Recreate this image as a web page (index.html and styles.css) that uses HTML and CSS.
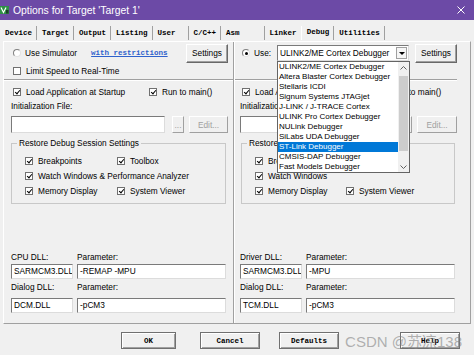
FILE: index.html
```html
<!DOCTYPE html>
<html lang="en">
<head>
    <meta charset="UTF-8">
    <meta name="viewport" content="width=device-width, initial-scale=1.0">
    <title>Options for Target 'Target 1'</title>
    <link rel="stylesheet" href="styles.css">
</head>
<body>
    <div class="window">
        <div class="titlebar">
            <svg class="title-icon" viewBox="0 0 9 8">
                <rect width="9" height="8" fill="#2f8f46"/>
                <path d="M1 1.5L3.5 6.5L6 1.5" stroke="#fff" stroke-width="1.2" fill="none"/>
                <rect x="6" y="4" width="2.5" height="3.5" fill="#1d3d28"/>
            </svg>
            <span class="title-text">Options for Target 'Target 1'</span>
            <svg class="title-close" viewBox="0 0 8 8">
                <path d="M0.5 0.5L7.5 7.5M7.5 0.5L0.5 7.5" stroke="#fff" stroke-width="1"/>
            </svg>
        </div>

        <div class="tabs">
            <span class="tab">Device</span>
            <span class="tab">Target</span>
            <span class="tab">Output</span>
            <span class="tab">Listing</span>
            <span class="tab tab-user">User</span>
            <span class="tab">C/C++</span>
            <span class="tab tab-asm">Asm</span>
            <span class="tab">Linker</span>
            <span class="tab active">Debug</span>
            <span class="tab">Utilities</span>
        </div>

        <div class="panel">
            <!-- simulator side -->
            <div class="col col-left">
                <div class="row-top">
                    <span class="radio"></span>
                    <span>Use Simulator</span>
                    <a class="link">with restrictions</a>
                    <button class="btn btn-settings">Settings</button>
                </div>
                <div class="row"><span class="cb"></span>Limit Speed to Real-Time</div>
                <div class="sep"></div>
                <div class="pair">
                    <div class="check"><span class="cb on"></span>Load Application at Startup</div>
                    <div class="check"><span class="cb on"></span>Run to main()</div>
                </div>
                <div class="row">Initialization File:</div>
                <div class="file-row">
                    <div class="field"></div>
                    <button class="btn btn-dots" disabled>...</button>
                    <button class="btn btn-edit" disabled>Edit...</button>
                </div>
                <fieldset class="group">
                    <legend>Restore Debug Session Settings</legend>
                    <div class="group-row">
                        <div class="check"><span class="cb on"></span>Breakpoints</div>
                        <div class="check"><span class="cb on"></span>Toolbox</div>
                    </div>
                    <div class="group-row">
                        <div class="check wide"><span class="cb on"></span>Watch Windows &amp; Performance Analyzer</div>
                    </div>
                    <div class="group-row">
                        <div class="check"><span class="cb on"></span>Memory Display</div>
                        <div class="check"><span class="cb on"></span>System Viewer</div>
                    </div>
                </fieldset>
                <div class="dll">
                    <span class="dll-label">CPU DLL:</span>
                    <span class="dll-label">Parameter:</span>
                    <div class="field">SARMCM3.DLL</div>
                    <div class="field">-REMAP -MPU</div>
                    <span class="dll-label second">Dialog DLL:</span>
                    <span class="dll-label second">Parameter:</span>
                    <div class="field second">DCM.DLL</div>
                    <div class="field second">-pCM3</div>
                </div>
            </div>

            <!-- target side -->
            <div class="col col-right">
                <div class="row-top">
                    <span class="radio on"></span>
                    <span class="use-label">Use:</span>
                    <div class="select">
                        <span>ULINK2/ME Cortex Debugger</span>
                        <span class="select-arrow"></span>
                        <div class="dropdown">
                            <div class="dropdown-items">
                                <div class="dropdown-item">ULINK2/ME Cortex Debugger</div>
                                <div class="dropdown-item">Altera Blaster Cortex Debugger</div>
                                <div class="dropdown-item">Stellaris ICDI</div>
                                <div class="dropdown-item">Signum Systems JTAGjet</div>
                                <div class="dropdown-item">J-LINK / J-TRACE Cortex</div>
                                <div class="dropdown-item">ULINK Pro Cortex Debugger</div>
                                <div class="dropdown-item">NULink Debugger</div>
                                <div class="dropdown-item">SiLabs UDA Debugger</div>
                                <div class="dropdown-item selected">ST-Link Debugger</div>
                                <div class="dropdown-item">CMSIS-DAP Debugger</div>
                                <div class="dropdown-item">Fast Models Debugger</div>
                            </div>
                            <div class="scrollbar">
                                <span class="scroll-arrow">
                                    <svg width="7" height="4" viewBox="0 0 7 4"><path d="M0.5 3.5L3.5 0.5L6.5 3.5" stroke="#606060" fill="none"/></svg>
                                </span>
                                <span class="scroll-thumb"></span>
                                <span class="scroll-arrow down">
                                    <svg width="7" height="4" viewBox="0 0 7 4"><path d="M0.5 0.5L3.5 3.5L6.5 0.5" stroke="#606060" fill="none"/></svg>
                                </span>
                            </div>
                        </div>
                    </div>
                    <button class="btn btn-settings">Settings</button>
                </div>
                <div class="row"></div>
                <div class="sep"></div>
                <div class="pair">
                    <div class="check"><span class="cb on"></span>Load Application at Startup</div>
                    <div class="check"><span class="cb on"></span>Run to main()</div>
                </div>
                <div class="row">Initialization File:</div>
                <div class="file-row">
                    <div class="field"></div>
                    <button class="btn btn-dots" disabled>...</button>
                    <button class="btn btn-edit" disabled>Edit...</button>
                </div>
                <fieldset class="group">
                    <legend>Restore Debug Session Settings</legend>
                    <div class="group-row">
                        <div class="check"><span class="cb on"></span>Breakpoints</div>
                        <div class="check"><span class="cb on"></span>Toolbox</div>
                    </div>
                    <div class="group-row">
                        <div class="check wide"><span class="cb on"></span>Watch Windows</div>
                    </div>
                    <div class="group-row">
                        <div class="check"><span class="cb on"></span>Memory Display</div>
                        <div class="check"><span class="cb on"></span>System Viewer</div>
                    </div>
                </fieldset>
                <div class="dll">
                    <span class="dll-label">Driver DLL:</span>
                    <span class="dll-label">Parameter:</span>
                    <div class="field">SARMCM3.DLL</div>
                    <div class="field">-MPU</div>
                    <span class="dll-label second">Dialog DLL:</span>
                    <span class="dll-label second">Parameter:</span>
                    <div class="field second">TCM.DLL</div>
                    <div class="field second">-pCM3</div>
                </div>
            </div>
        </div>

        <div class="actions">
            <button class="btn btn-action btn-ok">OK</button>
            <button class="btn btn-action btn-cancel">Cancel</button>
            <button class="btn btn-action btn-defaults">Defaults</button>
            <button class="btn btn-action btn-help">Help</button>
        </div>

        <div class="watermark">CSDN @苏凉138</div>
    </div>
</body>
</html>
```

FILE: styles.css
```css
* {
    box-sizing: border-box;
}

body {
    margin: 0;
    width: 474px;
    height: 355px;
    overflow: hidden;
    background-color: #f0f0f0;
    font-family: "Liberation Sans", Arial, sans-serif;
    font-size: 8.3px;
    color: #000;
}

.window {
    position: relative;
    height: 355px;
}

/* title bar */
.titlebar {
    height: 20px;
    display: flex;
    align-items: center;
    background-color: #6c4aa6;
    color: #fff;
}

.title-icon {
    width: 9px;
    height: 8px;
}

.title-text {
    margin-left: 4px;
    font-size: 10.4px;
}

.title-close {
    width: 8px;
    height: 8px;
    margin-left: auto;
    margin-right: 9px;
}

/* tab strip */
.tabs {
    display: flex;
    height: 21px;
    padding-top: 6px;
    font-family: "Liberation Mono", monospace;
    font-weight: bold;
    font-size: 7.5px;
}

.tab {
    height: 14px;
    line-height: 14px;
    padding: 0 4px 0 5px;
    border-right: 1px solid #a0a0a0;
}

.tab-user {
    padding-right: 12px;
}

.tab-asm {
    padding-right: 24px;
}

.tab.active {
    line-height: 12px;
    border-left: 1px solid #fff;
    margin-left: -1px;
}

/* main panel */
.panel {
    display: grid;
    grid-template-columns: 230px 1fr;
    height: 283px;
    margin: 0 3px;
    border: 1px solid #a0a0a0;
    border-top-color: #fff;
    border-left-color: #fff;
}

.col {
    display: flex;
    flex-direction: column;
}

.col-left {
    padding: 1px 5px 10px 7px;
    border-right: 1px solid #a0a0a0;
}

.col-right {
    padding: 1px 13px 10px 5px;
    border-left: 1px solid #fff;
}

.row-top {
    display: flex;
    align-items: center;
    height: 20px;
}

.row {
    display: flex;
    align-items: center;
    height: 12px;
    margin-top: 2px;
}

.sep {
    height: 2px;
    margin: 2px -5px 0 -7px;
    border-top: 1px solid #a0a0a0;
    border-bottom: 1px solid #fff;
}

.col-right .sep {
    margin: 2px 0 0 -5px;
}

.pair {
    display: grid;
    grid-template-columns: 136px auto;
    height: 12px;
    margin-top: 5px;
}

.check {
    display: flex;
    align-items: center;
    white-space: nowrap;
}

/* radio and checkbox */
.radio {
    width: 8px;
    height: 8px;
    margin: 0 4px 0 2px;
    border: 1px solid;
    border-color: #808080 #e3e3e3 #e3e3e3 #808080;
    border-radius: 50%;
    background-color: #fff;
    display: flex;
    align-items: center;
    justify-content: center;
}

.radio.on::after {
    content: "";
    width: 3px;
    height: 3px;
    border-radius: 50%;
    background-color: #000;
}

.cb {
    flex: none;
    width: 8px;
    height: 8px;
    margin: 0 5px 0 2px;
    border: 1px solid #707070;
    background-color: #fff;
    display: flex;
    align-items: center;
    justify-content: center;
}

.cb.on::after {
    content: "";
    width: 2px;
    height: 4px;
    margin-top: -1px;
    border: solid #000;
    border-width: 0 1.5px 1.5px 0;
    transform: rotate(40deg);
}

.link {
    margin-left: 14px;
    font-family: "Liberation Mono", monospace;
    font-weight: bold;
    font-size: 7.5px;
    color: #2f62cc;
    text-decoration: underline;
}

/* buttons */
.btn {
    padding: 0;
    font-family: inherit;
    font-size: inherit;
    color: #000;
    background-color: #f0f0f0;
    border: 1px solid;
    border-color: #fff #696969 #696969 #fff;
    box-shadow: inset -1px -1px #a0a0a0;
}

.btn:disabled {
    color: #a0a0a0;
    border-color: #fff #a0a0a0 #a0a0a0 #fff;
    box-shadow: none;
}

.btn-settings {
    width: 42px;
    height: 19px;
    margin-left: auto;
}

/* text fields */
.field {
    height: 15px;
    padding-left: 2px;
    line-height: 13px;
    white-space: nowrap;
    overflow: hidden;
    background-color: #fff;
    border: 1px solid;
    border-color: #7a7a7a #dcdcdc #dcdcdc #7a7a7a;
}

.file-row {
    display: flex;
    height: 17px;
    margin-top: 4px;
}

.file-row .field {
    flex: 1;
    height: 17px;
}

.btn-dots {
    width: 12px;
    margin-left: 7px;
}

.btn-edit {
    width: 39px;
    margin-left: 5px;
}

.col-right .btn-edit {
    width: 40px;
}

/* restore settings group */
.group {
    min-width: 0;
    margin: 4px 2px 0 0;
    padding: 4px 0 5px 5px;
    border: 1px solid #c8c8c8;
}

.col-right .group {
    margin-left: 1px;
}

.group legend {
    height: 12px;
    padding: 0 2px;
    line-height: 12px;
}

.group-row {
    display: grid;
    grid-template-columns: 92px auto;
    align-items: center;
    height: 15px;
    padding-left: 6px;
}

.col-right .group-row {
    grid-template-columns: 91px auto;
}

/* dll settings */
.dll {
    display: grid;
    grid-template-columns: 62px 1fr;
    column-gap: 4px;
    margin-top: auto;
    margin-right: 2px;
}

.dll-label {
    height: 12px;
    line-height: 12px;
}

.dll .field {
    margin-top: 1px;
}

.dll .dll-label.second {
    margin-top: 2px;
}

.dll .field.second {
    margin-top: 5px;
}

/* debugger combo */
.use-label {
    width: 23px;
}

.select {
    position: relative;
    display: flex;
    align-items: center;
    width: 132px;
    height: 16px;
    padding-left: 2px;
    background-color: #fff;
    border: 1px solid;
    border-color: #7a7a7a #dcdcdc #dcdcdc #7a7a7a;
    white-space: nowrap;
}

.select-arrow {
    display: flex;
    align-items: center;
    justify-content: center;
    width: 11px;
    height: 12px;
    margin-left: auto;
    margin-right: 1px;
    border: 1px solid #a0a0a0;
    background-color: #f6f6f6;
}

.select-arrow::after {
    content: "";
    border-left: 3px solid transparent;
    border-right: 3px solid transparent;
    border-top: 3px solid #000;
}

.dropdown {
    position: absolute;
    top: calc(100% + 1px);
    left: -1px;
    z-index: 2;
    display: flex;
    width: 133px;
    height: 112px;
    font-size: 8px;
    background-color: #fff;
    border: 1px solid #646464;
}

.dropdown-items {
    flex: 1;
}

.dropdown-item {
    height: 10px;
    padding-left: 1px;
    line-height: 10px;
    white-space: nowrap;
}

.dropdown-item.selected {
    background-color: #0078d7;
    color: #fff;
}

.scrollbar {
    display: flex;
    flex-direction: column;
    align-items: center;
    width: 11px;
    background-color: #f0f0f0;
}

.scroll-arrow {
    display: flex;
    align-items: center;
    justify-content: center;
    height: 11px;
}

.scroll-arrow.down {
    margin-top: auto;
}

.scroll-thumb {
    width: 9px;
    height: 75px;
    margin-top: 3px;
    background-color: #cdcdcd;
}

/* dialog buttons */
.actions {
    display: flex;
    margin-top: 8px;
    padding-left: 121px;
}

.btn-action {
    width: 60px;
    height: 17px;
    font-family: "Liberation Mono", monospace;
    font-weight: bold;
    font-size: 7.5px;
    border: 1px solid #707070;
    box-shadow: inset 1px 1px #fff, inset -1px -1px #a0a0a0;
}

.btn-ok {
    width: 55px;
}

.btn-cancel {
    margin-left: 24px;
}

.btn-defaults {
    margin-left: 19px;
}

.btn-help {
    margin-left: 61px;
}

.watermark {
    position: absolute;
    right: 12px;
    bottom: 4px;
    font-family: "Liberation Sans", "Noto Sans CJK SC", sans-serif;
    font-size: 15px;
    color: rgba(130, 130, 130, 0.6);
    white-space: nowrap;
}
```
